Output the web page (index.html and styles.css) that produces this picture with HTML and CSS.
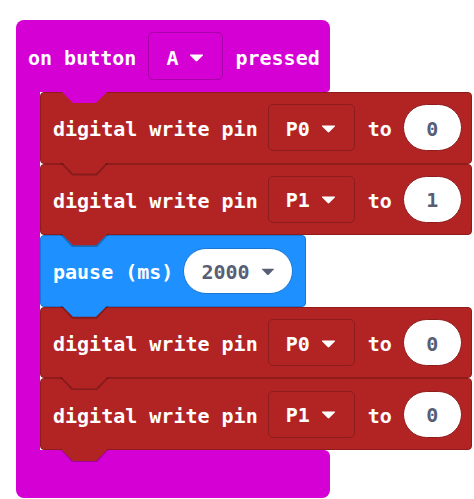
FILE: index.html
```html
<!DOCTYPE html>
<html lang="en">
<head>
  <meta charset="UTF-8">
  <meta name="viewport" content="width=device-width, initial-scale=1.0">
  <title>on button A pressed</title>
  <link rel="stylesheet" href="styles.css">
</head>
<body>
  <!-- Event block with its statement stack -->
  <div class="hat">
    <div class="hat-head">
      <span class="label">on button</span>
      <span class="dropdown">A <svg class="caret" viewBox="0 0 15 8"><path d="M1.5 0.5 H13.5 Q14.6 0.5 13.8 1.4 L8.3 7 Q7.5 7.8 6.7 7 L1.2 1.4 Q0.4 0.5 1.5 0.5 Z"/></svg></span>
      <span class="label">pressed</span>
    </div>

    <div class="hat-body">
      <div class="hat-arm"></div>
      <div class="stack">
        <div class="block pin">
          <span class="label">digital write pin</span>
          <span class="dropdown">P0 <svg class="caret" viewBox="0 0 15 8"><path d="M1.5 0.5 H13.5 Q14.6 0.5 13.8 1.4 L8.3 7 Q7.5 7.8 6.7 7 L1.2 1.4 Q0.4 0.5 1.5 0.5 Z"/></svg></span>
          <span class="label to">to</span>
          <span class="field">0</span>
        </div>
        <div class="block pin">
          <span class="label">digital write pin</span>
          <span class="dropdown">P1 <svg class="caret" viewBox="0 0 15 8"><path d="M1.5 0.5 H13.5 Q14.6 0.5 13.8 1.4 L8.3 7 Q7.5 7.8 6.7 7 L1.2 1.4 Q0.4 0.5 1.5 0.5 Z"/></svg></span>
          <span class="label to">to</span>
          <span class="field">1</span>
        </div>
        <div class="block pause">
          <span class="label">pause (ms)</span>
          <span class="dropdown field-drop">2000 <svg class="caret" viewBox="0 0 15 8"><path d="M1.5 0.5 H13.5 Q14.6 0.5 13.8 1.4 L8.3 7 Q7.5 7.8 6.7 7 L1.2 1.4 Q0.4 0.5 1.5 0.5 Z"/></svg></span>
        </div>
        <div class="block pin">
          <span class="label">digital write pin</span>
          <span class="dropdown">P0 <svg class="caret" viewBox="0 0 15 8"><path d="M1.5 0.5 H13.5 Q14.6 0.5 13.8 1.4 L8.3 7 Q7.5 7.8 6.7 7 L1.2 1.4 Q0.4 0.5 1.5 0.5 Z"/></svg></span>
          <span class="label to">to</span>
          <span class="field">0</span>
        </div>
        <div class="block pin">
          <span class="label">digital write pin</span>
          <span class="dropdown">P1 <svg class="caret" viewBox="0 0 15 8"><path d="M1.5 0.5 H13.5 Q14.6 0.5 13.8 1.4 L8.3 7 Q7.5 7.8 6.7 7 L1.2 1.4 Q0.4 0.5 1.5 0.5 Z"/></svg></span>
          <span class="label to">to</span>
          <span class="field">0</span>
        </div>
      </div>
    </div>

    <div class="hat-foot"></div>
  </div>
</body>
</html>
```

FILE: styles.css
```css
body {
  margin: 0;
  padding: 20px 0 0 16px;
  background: #fff;
  font-family: "DejaVu Sans Mono", "Liberation Mono", monospace;
  font-weight: bold;
  font-size: 20px;
  color: #fff;
  white-space: nowrap;
  overflow: hidden;
}

.hat {
  display: flex;
  flex-direction: column;
  align-items: flex-start;
}

/* event header */
.hat-head {
  position: relative;
  box-sizing: border-box;
  width: 314px;
  height: 72px;
  padding: 0 12px;
  display: flex;
  align-items: center;
  gap: 12px;
  background: #d400d4;
  border-radius: 8px 8px 4px 0;
}

.hat-head > *,
.block > * {
  flex-shrink: 0;
}

.label {
  padding-top: 3px;
}

.hat-body {
  display: flex;
}

.hat-arm {
  width: 24px;
  background: #d400d4;
}

.stack {
  display: flex;
  flex-direction: column;
}

.hat-foot {
  width: 314px;
  height: 48px;
  background: #d400d4;
  border-radius: 0 6px 8px 8px;
}

/* statement blocks */
.block {
  position: relative;
  box-sizing: border-box;
  height: 71.6px;
  padding: 0 12px;
  display: flex;
  align-items: center;
  gap: 10px;
  border: 1px solid #8f1b1b;
  border-radius: 4px;
}

.pin {
  width: 432px;
  background: #b22424;
}

.pin .to {
  margin: 0 1px 0 3px;
}

.pause {
  width: 266px;
  background: #1e90ff;
  border-color: #1a76d2;
}

/* the connector tab under each block */
.block::before {
  content: "";
  position: absolute;
  left: 19px;
  bottom: -13px;
  width: 49px;
  height: 13px;
  background: rgba(0, 0, 0, 0.25);
  clip-path: polygon(0 0, 49px 0, 37px 13px, 12px 13px);
  z-index: 2;
}

.block::after,
.hat-head::after {
  content: "";
  position: absolute;
  left: 20px;
  bottom: -12px;
  width: 47px;
  height: 13px;
  background: inherit;
  clip-path: polygon(0 0, 47px 0, 35px 12px, 12px 12px);
  z-index: 3;
}

.hat-head::after {
  left: 45px;
  background: #d400d4;
}

.block:last-child::after {
  bottom: -13px;
}

/* dropdowns and value fields */
.dropdown {
  box-sizing: border-box;
  height: 47px;
  padding: 0 18px 0 17px;
  display: flex;
  align-items: center;
  gap: 11px;
  border: 1px solid rgba(0, 0, 0, 0.2);
  border-radius: 5px;
}

.hat-head .dropdown {
  height: 48px;
  padding-top: 3px;
}

.pin .dropdown {
  padding-top: 2px;
}

.caret {
  width: 15px;
  height: 8px;
  fill: #fff;
}

.field {
  box-sizing: border-box;
  min-width: 59px;
  height: 47px;
  padding-top: 2px;
  display: flex;
  align-items: center;
  justify-content: center;
  background: #fff;
  color: #575e75;
  border: 1px solid #8f1b1b;
  border-radius: 24px;
}

.field-drop {
  width: 110px;
  height: 46px;
  padding-top: 2px;
  background: #fff;
  color: #575e75;
  border-color: #1a76d2;
  border-radius: 23px;
}

.field-drop .caret {
  fill: #575e75;
}
```
